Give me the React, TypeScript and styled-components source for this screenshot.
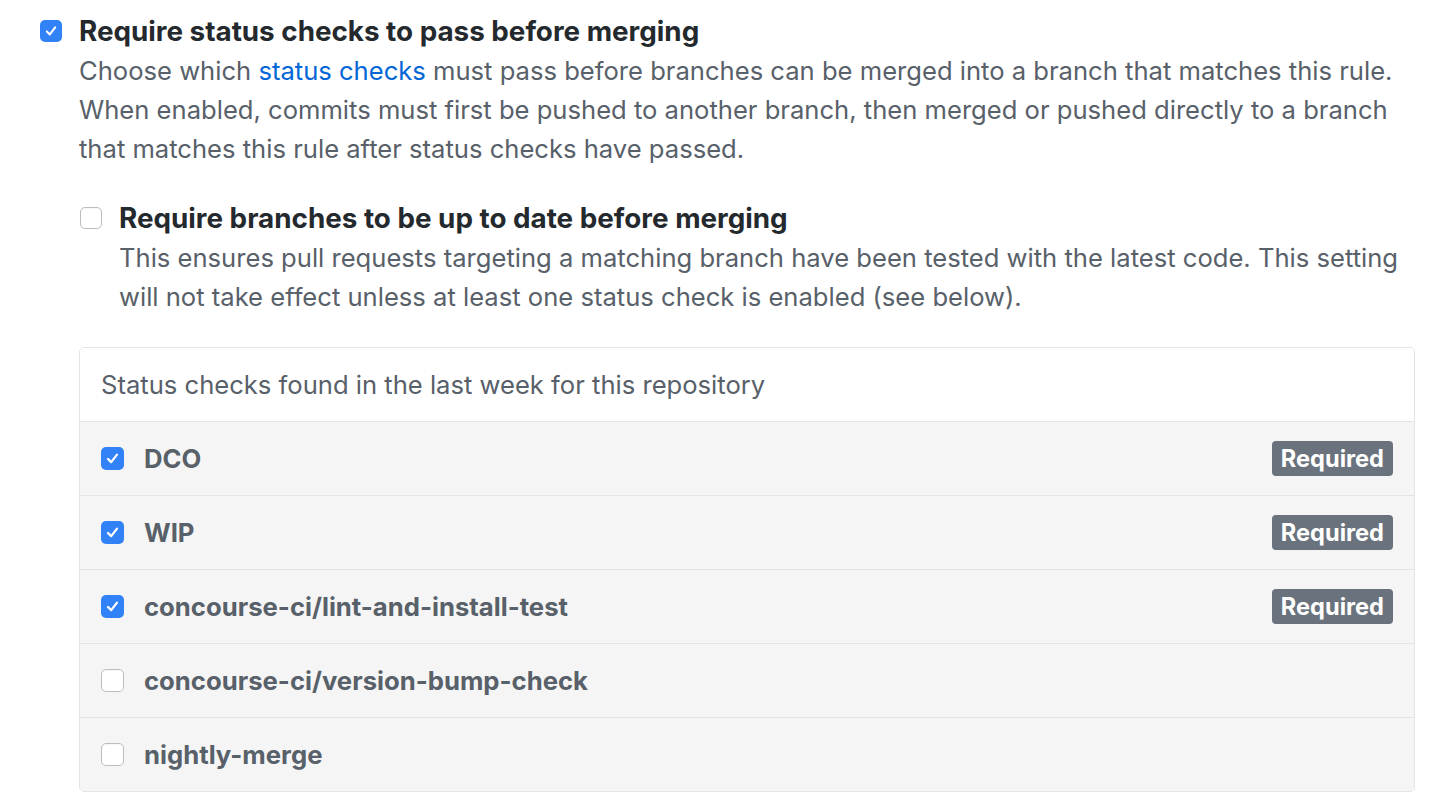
import { createGlobalStyle } from "styled-components";
import styled from "styled-components";

const GlobalStyle = createGlobalStyle`
  body {
    margin: 0;
    background: #ffffff;
    font-family: Inter, "Noto Sans", "Liberation Sans", sans-serif;
  }
`;

// data for the status check list
const checks = [
  { name: "DCO", required: true },
  { name: "WIP", required: true },
  { name: "concourse-ci/lint-and-install-test", required: true },
  { name: "concourse-ci/version-bump-check", required: false },
  { name: "nightly-merge", required: false },
];

const Page = styled.div`
  padding: 11px 23px 0 40px;
`;

const Option = styled.div<{ nested?: boolean }>`
  display: grid;
  grid-template-columns: 22px 1fr;
  column-gap: 17px;
  margin-left: ${(p) => (p.nested ? "40px" : "0")};
  margin-top: ${(p) => (p.nested ? "30px" : "0")};
`;

const Box = styled.span<{ checked?: boolean; size?: number }>`
  display: flex;
  align-items: center;
  justify-content: center;
  box-sizing: border-box;
  width: ${(p) => p.size ?? 22}px;
  height: ${(p) => p.size ?? 22}px;
  margin-top: ${(p) => (p.size ? 0 : 9)}px;
  border-radius: 5px;
  background: ${(p) => (p.checked ? "#3182f6" : "#ffffff")};
  border: ${(p) => (p.checked ? "none" : "1px solid #bdbdbd")};
  box-shadow: ${(p) => (p.checked ? "none" : "inset 0 1px 1px rgba(0,0,0,0.04)")};
`;

const Title = styled.div`
  font-size: 27.8px;
  line-height: 40px;
  font-weight: 700;
  color: #24292e;
`;

const Note = styled.p`
  grid-column: 2;
  margin: 0;
  font-size: 25.6px;
  line-height: 39px;
  color: #586069;
`;

const Link = styled.a`
  color: #0366d6;
  text-decoration: none;
`;

const Panel = styled.div`
  margin: 31px 0 0 39px;
  border: 1px solid #e1e4e8;
  border-radius: 5px;
  overflow: hidden;
`;

const PanelHead = styled.div`
  height: 73px;
  display: flex;
  align-items: center;
  padding-left: 21px;
  font-size: 25.6px;
  color: #586069;
  background: #ffffff;
`;

const Row = styled.div`
  display: flex;
  align-items: center;
  height: 73px;
  border-top: 1px solid #e1e4e8;
  background: #f5f5f5;
  padding: 0 21px 0 21px;
  gap: 20px;
`;

const CheckName = styled.span`
  flex: 1;
  font-size: 25.7px;
  font-weight: 700;
  color: #586069;
`;

const Badge = styled.span`
  background: #6a737d;
  color: #ffffff;
  font-size: 23.6px;
  font-weight: 700;
  line-height: 35px;
  padding: 0 9px;
  border-radius: 4px;
`;

const Tick = ({ small }: { small?: boolean }) => (
  <svg width={small ? 15 : 14} height={small ? 15 : 14} viewBox="0 0 14 14">
    <path
      d="M2.8 7.4 L5.8 10.4 L11.2 3.4"
      fill="none"
      stroke="#ffffff"
      strokeWidth="2.1"
      strokeLinecap="round"
      strokeLinejoin="round"
    />
  </svg>
);

const CheckBox = ({ checked, size }: { checked?: boolean; size?: number }) => (
  <Box checked={checked} size={size}>
    {checked && <Tick small={!!size} />}
  </Box>
);

export default function App() {
  return (
    <Page>
      <GlobalStyle />
      <Option>
        <CheckBox checked />
        <Title>Require status checks to pass before merging</Title>
        <Note>
          Choose which <Link href="#">status checks</Link> must pass before branches can be merged into a branch
          that matches this rule. When enabled, commits must first be pushed to another branch, then merged or
          pushed directly to a branch that matches this rule after status checks have passed.
        </Note>
      </Option>
      <Option nested>
        <CheckBox />
        <Title>Require branches to be up to date before merging</Title>
        <Note>
          This ensures pull requests targeting a matching branch have been tested with the latest code. This
          setting will not take effect unless at least one status check is enabled (see below).
        </Note>
      </Option>
      <Panel>
        <PanelHead>Status checks found in the last week for this repository</PanelHead>
        {checks.map((check) => (
          <Row key={check.name}>
            <CheckBox checked={check.required} size={23} />
            <CheckName>{check.name}</CheckName>
            {check.required && <Badge>Required</Badge>}
          </Row>
        ))}
      </Panel>
    </Page>
  );
}
